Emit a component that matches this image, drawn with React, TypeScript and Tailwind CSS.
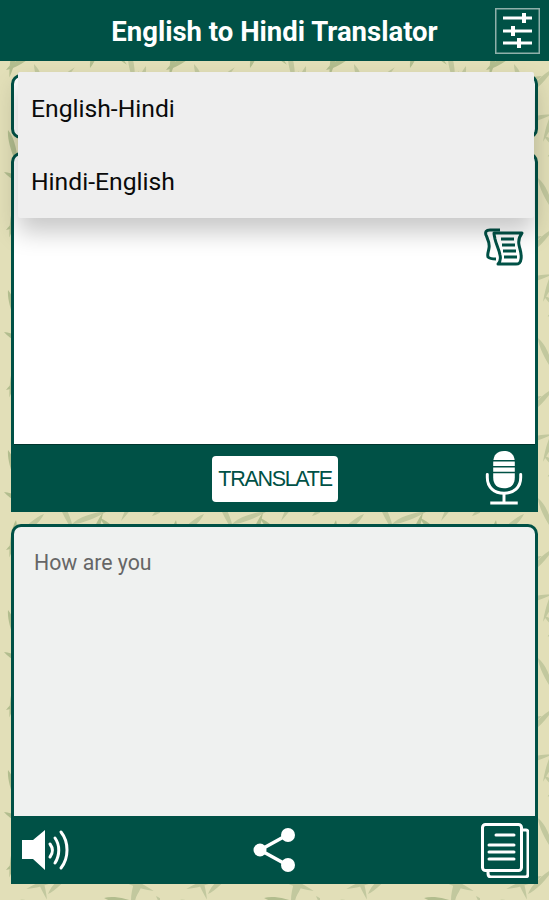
import React from 'react';

const GREEN = '#005146';

const leaves = [
  [4, 12, 30], [30, 4, -50], [58, 18, 65], [84, 6, 15], [112, 22, -60], [140, 8, 120],
  [16, 40, 100], [44, 34, 140], [72, 44, -20], [100, 38, 45], [128, 48, 80], [152, 36, -35],
  [6, 70, -30], [34, 64, 70], [62, 76, 160], [90, 68, -70], [118, 78, 20], [146, 66, 110],
  [20, 100, 20], [48, 94, -45], [76, 106, 110], [104, 98, 10], [132, 108, -80], [156, 96, 50],
  [8, 130, 75], [36, 124, -15], [64, 136, 40], [92, 128, 130], [120, 138, -55], [148, 126, 95],
  [24, 154, -65], [80, 156, 25], [136, 152, 150]
];

function LeafPattern() {
  return (
    <svg className="absolute inset-0 h-full w-full" aria-hidden="true">
      <defs>
        <pattern id="leaf" width="160" height="160" patternUnits="userSpaceOnUse">
          {leaves.map(([x, y, r], i) => (
            <path
              key={i}
              d="M0 0C8 -4 22 -4 38 0C22 3 8 3 0 0Z"
              fill={i % 3 === 0 ? '#b2bd8e' : '#c2c89e'}
              transform={`translate(${x} ${y}) rotate(${r})`}
            />
          ))}
        </pattern>
      </defs>
      <rect width="100%" height="100%" fill="url(#leaf)" />
    </svg>
  );
}

function SlidersIcon() {
  return (
    <svg width="45" height="46" viewBox="0 0 45 46" fill="none" stroke="white">
      <rect x="0.75" y="0.75" width="43.5" height="44.5" stroke="#8fb0aa" strokeWidth="1.5" />
      <g strokeWidth="3">
        <path d="M8 10H37M8 23H37M8 35H37" />
        <path d="M29 5V15M18 18V28M24 30V40" strokeWidth="4" />
      </g>
    </svg>
  );
}

function ScrollIcon() {
  return (
    <svg width="40" height="38" viewBox="0 0 40 38" fill="none" stroke={GREEN} strokeWidth="3" strokeLinejoin="round">
      <path d="M16 2H6C2 2 1 4 2 7C4 12 6 15 5 20C4.500 24 3 26 4 29C5 30 8 31 12 31" />
      <path d="M10 5H38C35 9 34 12 35 17C36 22 38 26 37 31C36.500 35 35 36 32 36H14C16 34 17 31 16 27C15 21 12 16 11 11C10.500 8 10 7 10 5Z" fill="white" />
      <path d="M17 11H30M18 17H31M19 23H32M20 29H33" strokeWidth="3" />
    </svg>
  );
}

function MicIcon() {
  return (
    <svg width="38" height="55" viewBox="0 0 38 56" fill="none">
      <path d="M8 13C8 5 12 1 19 1C26 1 30 5 30 13V28C30 35 26 39 19 39C12 39 8 35 8 28Z" fill="white" />
      <path d="M7 11H31M7 17H31M7 23H31" stroke={GREEN} strokeWidth="1.500" />
      <path d="M2 25V28C2 38 9 44 19 44C29 44 36 38 36 28V25" stroke="white" strokeWidth="3" strokeLinecap="round" />
      <path d="M19 44V53M5 54H33" stroke="white" strokeWidth="3" />
    </svg>
  );
}

function SpeakerIcon() {
  return (
    <svg width="50" height="42" viewBox="0 0 50 42" fill="none">
      <path d="M1 11H12L24 1V41L12 30H1Z" fill="white" />
      <path d="M29 15C32 19 32 24 29 28M34 9C39 16 39 26 34 34M40 3C48 13 48 29 40 39" stroke="white" strokeWidth="3" strokeLinecap="round" />
    </svg>
  );
}

function ShareIcon() {
  return (
    <svg width="44" height="46" viewBox="0 0 44 46" fill="white">
      <path d="M7 23L36 7M7 23L36 39" stroke="white" strokeWidth="3.500" />
      <circle cx="35" cy="8" r="7" />
      <circle cx="7" cy="23" r="6.500" />
      <circle cx="35" cy="38" r="7" />
    </svg>
  );
}

function DocsIcon() {
  return (
    <svg width="48" height="55" viewBox="0 0 48 55" fill="none" stroke="white" strokeWidth="3" strokeLinejoin="round">
      <path d="M39 7H45C46 7 47 8 47 9V51C47 53 46 54 44 54H10C8 54 7 53 7 50V47" />
      <rect x="1.500" y="1.500" width="39" height="46" rx="3" />
      <path d="M15 12H33M8 22H33M8 29H33M8 36H33" strokeLinecap="round" strokeWidth="3" />
    </svg>
  );
}

export default function App() {
  return (
    <div
      className="relative h-[900px] w-[549px] overflow-hidden bg-[#e2dfb8]"
      style={{ fontFamily: 'Roboto, "Liberation Sans", sans-serif' }}>

      <LeafPattern />

      <div className="relative flex flex-col">
        <header className="relative flex h-[61px] items-center justify-center bg-[#005146] pt-[3px]">
          <h1 className="text-[27.5px] font-bold text-white">English to Hindi Translator</h1>
          <div className="absolute right-[9px] top-[8px] flex">
            <SlidersIcon />
          </div>
        </header>

        <div className="flex flex-col pl-[11px] pr-[11px] pt-[13px]">
          {/* spinner card, mostly hidden by the dropdown */}
          <div className="h-[65px] rounded-[10px] border-[3px] border-[#005146] bg-white" />

          {/* input card */}
          <div className="mt-[13px] flex h-[360px] flex-col overflow-hidden rounded-t-[10px] border-x-[3px] border-t-[3px] border-[#005146] bg-white">
            <div className="flex flex-1 justify-end pr-[11px] pt-[73px]">
              <ScrollIcon />
            </div>
            <div className="-mx-[3px] flex h-[68px] items-start justify-between border-t border-[#00352d] bg-[#005146] pr-[15px]">
              <button className="ml-[201px] mt-[11px] flex h-[46px] w-[126px] items-center justify-center rounded-[4px] bg-white font-['Liberation_Sans'] text-[21.5px] tracking-[-1.3px] text-[#005146]">
                TRANSLATE
              </button>
              <div className="ml-auto mt-[5px] flex">
                <MicIcon />
              </div>
            </div>
          </div>

          {/* output card */}
          <div className="mt-[12px] flex h-[360px] flex-col overflow-hidden rounded-t-[10px] border-x-[3px] border-t-[3px] border-[#005146] bg-[#eff1f0]">
            <div className="flex-1 pl-[20px] pt-[22px] text-[21.3px] leading-[28px] text-[#666666]">How are you</div>
            <div className="-mx-[3px] flex h-[68px] items-center justify-between bg-[#005146] pl-[10px] pr-[9px]">
              <SpeakerIcon />
              <div className="-ml-[2px] flex">
                <ShareIcon />
              </div>
              <DocsIcon />
            </div>
          </div>
        </div>
      </div>

      {/* dropdown overlay */}
      <div className="absolute left-[18px] top-[72px] flex h-[146px] w-[516px] flex-col rounded-[2px] bg-[#eeeeee] text-[24.7px] text-[#0a0a0a] shadow-[0_14px_24px_rgba(0,0,0,0.22)]">
        <div className="flex h-[73px] items-center pl-[13px] pt-[1px]">English-Hindi</div>
        <div className="flex h-[73px] items-center pl-[13px] pt-[1px]">Hindi-English</div>
      </div>
    </div>
  );
}
